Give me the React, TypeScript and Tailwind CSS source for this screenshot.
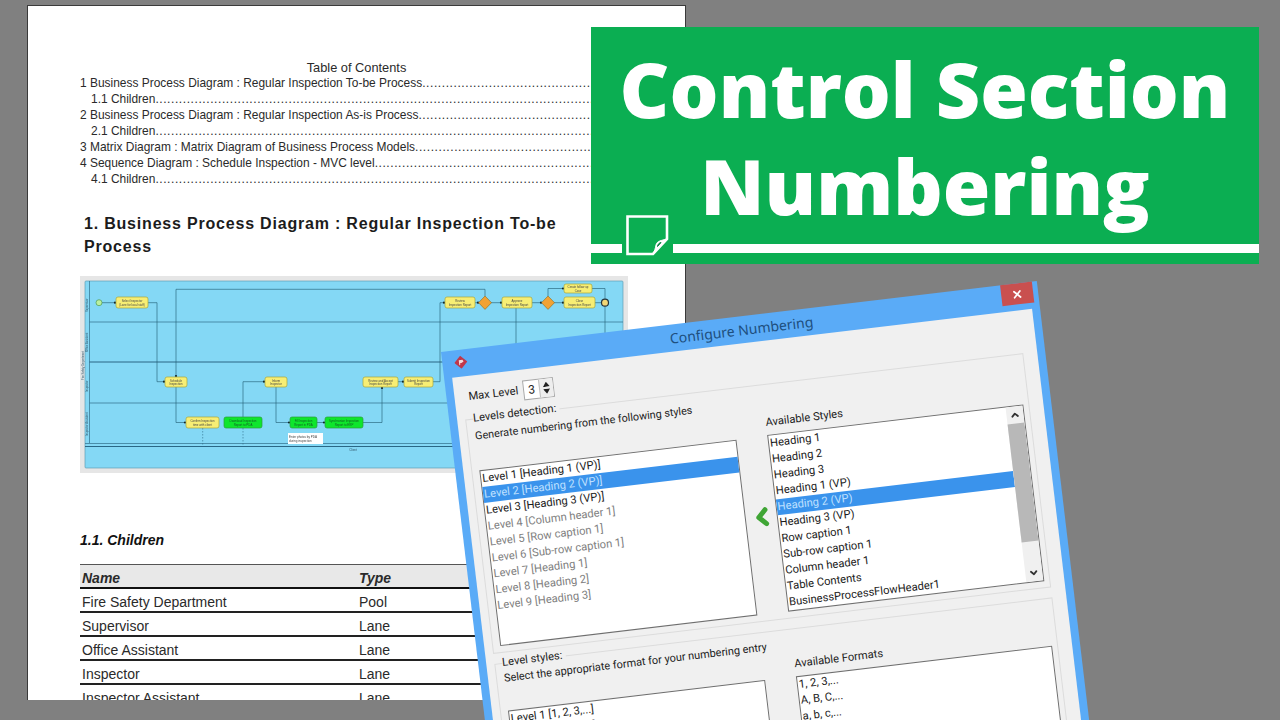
import { ChevronDown, ChevronUp, X } from "lucide-react";

const TOC = [
  { text: "1 Business Process Diagram : Regular Inspection To-be Process", sub: false },
  { text: "1.1 Children", sub: true },
  { text: "2 Business Process Diagram : Regular Inspection As-is Process", sub: false },
  { text: "2.1 Children", sub: true },
  { text: "3 Matrix Diagram : Matrix Diagram of Business Process Models", sub: false },
  { text: "4 Sequence Diagram : Schedule Inspection - MVC level", sub: false },
  { text: "4.1 Children", sub: true },
];

const CHILDREN = [
  ["Fire Safety Department", "Pool"],
  ["Supervisor", "Lane"],
  ["Office Assistant", "Lane"],
  ["Inspector", "Lane"],
  ["Inspector Assistant", "Lane"],
];

const LEVELS = [
  { label: "Level 1 [Heading 1 (VP)]", on: true },
  { label: "Level 2 [Heading 2 (VP)]", on: true, selected: true },
  { label: "Level 3 [Heading 3 (VP)]", on: true },
  { label: "Level 4 [Column header 1]" },
  { label: "Level 5 [Row caption 1]" },
  { label: "Level 6 [Sub-row caption 1]" },
  { label: "Level 7 [Heading 1]" },
  { label: "Level 8 [Heading 2]" },
  { label: "Level 9 [Heading 3]" },
];

const STYLES = [
  "Heading 1",
  "Heading 2",
  "Heading 3",
  "Heading 1 (VP)",
  "Heading 2 (VP)",
  "Heading 3 (VP)",
  "Row caption 1",
  "Sub-row caption 1",
  "Column header 1",
  "Table Contents",
  "BusinessProcessFlowHeader1",
];

const FORMATS = ["1, 2, 3,...", "A, B, C,...", "a, b, c,..."];

const DOTS = ".".repeat(120);

const TASKS = [
  { x: 36, y: 21, w: 32, h: 11, a: "Select Inspector", b: "(Lane for local staff)" },
  { x: 85, y: 101, w: 22, h: 10, a: "Schedule", b: "Inspection" },
  { x: 185, y: 101, w: 22, h: 10, a: "Inform", b: "Inspector" },
  { x: 283, y: 101, w: 35, h: 10, a: "Review and Accept", b: "Inspection Report" },
  { x: 324, y: 101, w: 29, h: 10, a: "Submit Inspection", b: "Report" },
  { x: 106, y: 141, w: 33, h: 11, a: "Confirm Inspection", b: "time with client" },
  { x: 365, y: 21, w: 30, h: 11, a: "Review", b: "Inspection Report" },
  { x: 422, y: 21, w: 30, h: 11, a: "Approve", b: "Inspection Report" },
  { x: 484, y: 8, w: 28, h: 9, a: "Create follow up", b: "Case" },
  { x: 484, y: 21, w: 31, h: 11, a: "Close", b: "Inspection Report" },
];

const GREEN_TASKS = [
  { x: 144, y: 141, w: 38, h: 11, a: "Download Inspection", b: "Report to PDA" },
  { x: 210, y: 141, w: 27, h: 11, a: "Fill Inspection", b: "Report in PDA" },
  { x: 245, y: 141, w: 38, h: 11, a: "Synchronize Inspection", b: "Report to ERP" },
];

const FLOWS = [
  "M22 26.7H36",
  "M68 26.7H77V105.7H85",
  "M96 101V13.3H405V20",
  "M96 111V146.5H106",
  "M163 141V105.7H185",
  "M196 111V146.5H210",
  "M237 146.5H245",
  "M283 146.5H302V111",
  "M318 105.7H324",
  "M353 105.7H360V26.7H365",
  "M395 26.7H399",
  "M411 26.7H422",
  "M452 26.7H462",
  "M474 26.7H484",
  "M468 20V12.5H484",
  "M512 12.5H525V23",
  "M515 26.7H521",
  "M436 32V130",
  "M525 30V130",
];

// little arrow heads where a flow enters a shape
const HEADS = [
  [35, 26.7], [84, 105.7], [96, 100], [105, 146.5], [184, 105.7], [209, 146.5], [244, 146.5],
  [323, 105.7], [302, 112], [364, 26.7], [398, 26.7], [421, 26.7], [461, 26.7], [483, 26.7], [483, 12.5],
];

function ProcessDiagram() {
  return (
    <svg width="548" height="197" viewBox="0 0 548 197" className="block blur-[0.3px]" fontFamily="Liberation Sans, sans-serif">
      <rect width="548" height="197" fill="#e6e6e6" />
      <rect x="5" y="5" width="538" height="187" rx="1" fill="#84d8f5" stroke="#5e9db5" strokeWidth="0.7" />
      <path d="M9.5 5V167M9.5 46H543M9.5 127H543M5 167.5H543" stroke="#2f6f8a" strokeWidth="0.7" fill="none" />
      <path d="M5 170.5H543M9.5 86H543" stroke="#1f5a78" strokeWidth="0.9" fill="none" />
      <path d={FLOWS.join("")} stroke="#1f5a70" strokeWidth="0.6" fill="none" />
      <path d="M122.7 152V170M163 152V170" stroke="#2f6f8a" strokeWidth="0.6" strokeDasharray="1.5 1.5" fill="none" />
      {HEADS.map(([x, y]) => (
        <circle key={`${x}-${y}`} cx={x} cy={y} r="1.1" fill="#10242c" />
      ))}
      <circle cx="19" cy="26.7" r="3" fill="#b9f0a0" stroke="#4f9a50" strokeWidth="0.7" />
      <circle cx="525" cy="26.7" r="3.5" fill="#f2d675" stroke="#28353d" strokeWidth="1.2" />
      <path d="M405 20L411.5 26.7L405 33.4L398.5 26.7ZM468 20L474.5 26.7L468 33.4L461.5 26.7Z" fill="#f2a233" stroke="#8a6a20" strokeWidth="0.6" />
      {TASKS.map((t) => (
        <g key={t.a + t.x}>
          <rect x={t.x} y={t.y} width={t.w} height={t.h} rx="2" fill="#f7ee74" stroke="#a8a83c" strokeWidth="0.7" />
          <text x={t.x + t.w / 2} y={t.y + t.h / 2 - 0.3} fontSize="2.9" textAnchor="middle" fill="#444">{t.a}</text>
          <text x={t.x + t.w / 2} y={t.y + t.h / 2 + 3} fontSize="2.9" textAnchor="middle" fill="#444">{t.b}</text>
        </g>
      ))}
      {GREEN_TASKS.map((t) => (
        <g key={t.a}>
          <rect x={t.x} y={t.y} width={t.w} height={t.h} rx="2" fill="#0ee62c" stroke="#2b9b3d" strokeWidth="0.7" />
          <text x={t.x + t.w / 2} y={t.y + t.h / 2 - 0.3} fontSize="2.9" textAnchor="middle" fill="#125a24">{t.a}</text>
          <text x={t.x + t.w / 2} y={t.y + t.h / 2 + 3} fontSize="2.9" textAnchor="middle" fill="#125a24">{t.b}</text>
        </g>
      ))}
      <rect x="208" y="157" width="35" height="11" fill="#ffffff" />
      <text x="209" y="161.5" fontSize="3" fill="#444">Enter photos by PDA</text>
      <text x="209" y="165.5" fontSize="3" fill="#444">during inspection</text>
      <text x="273" y="174.5" fontSize="3" textAnchor="middle" fill="#33566a">Client</text>
      <g fontSize="2.8" fill="#33566a">
        <text transform="translate(8 36) rotate(-90)">Supervisor</text>
        <text transform="translate(8 76) rotate(-90)">Office Assistant</text>
        <text transform="translate(8 116) rotate(-90)">Inspector</text>
        <text transform="translate(8 160) rotate(-90)">Inspector Assistant</text>
        <text transform="translate(4.4 104) rotate(-90)">Fire Safety Department</text>
      </g>
    </svg>
  );
}

function DocumentPage() {
  return (
    <div className="absolute left-[27px] top-[5px] h-[695px] w-[659px] overflow-hidden border-x border-t border-[#3a3a3a] bg-white pl-[52px] pt-[54px] text-[#2a2a2a] [font-family:'Liberation_Sans',Arial,sans-serif]">
      <div className="h-[15px] pr-[52px] text-center text-[12.8px] leading-[16px]">Table of Contents</div>
      <div className="text-[11.95px] leading-[16px]">
        {TOC.map((row) => (
          <div key={row.text} className={row.sub ? "flex pl-[11px]" : "flex"}>
            <span className="whitespace-nowrap">{row.text}</span>
            <span className="min-w-0 flex-1 overflow-hidden whitespace-nowrap tracking-[0.6px]">{DOTS}</span>
          </div>
        ))}
      </div>
      <h1 className="mt-[25px] w-[500px] pl-[4px] text-[16px] font-bold leading-[23px] tracking-[0.8px] text-[#1c1c1c]">
        1. Business Process Diagram : Regular Inspection To-be Process
      </h1>
      <div className="mt-[18px]">
        <ProcessDiagram />
      </div>
      <h2 className="mt-[57px] h-[20px] text-[14px] font-bold italic leading-[20px] text-[#111]">1.1. Children</h2>
      <div className="mt-[14px] w-[560px] border-t border-[#555] text-[14px]">
        <div className="flex h-[24px] items-center border-b-2 border-[#111] bg-[#e8e8e8] pt-[5px] font-bold italic">
          <span className="w-[279px] pl-[2px]">Name</span>
          <span>Type</span>
        </div>
        {CHILDREN.map(([name, type]) => (
          <div key={name} className="flex h-[24px] items-center border-b-2 border-[#222] pt-[5px]">
            <span className="w-[279px] pl-[2px]">{name}</span>
            <span>{type}</span>
          </div>
        ))}
      </div>
    </div>
  );
}

function Banner() {
  return (
    <div className="absolute left-[591px] top-[27px] flex h-[237px] w-[668px] flex-col bg-[#0bae52] pt-[13px] text-white">
      <div className="h-[97px] text-center text-[77px] font-extrabold leading-[97px] [font-family:'Open_Sans',sans-serif]">Control Section</div>
      <div className="h-[97px] text-center text-[77px] font-extrabold leading-[97px] [font-family:'Open_Sans',sans-serif]">Numbering</div>
      <div className="-mt-[19px] flex items-start">
        <div className="mt-[29px] h-[9px] w-[31px] bg-white" />
        <svg width="44" height="41" viewBox="0 0 44 41" className="ml-[4px] shrink-0" fill="none" stroke="white" strokeWidth="2.6">
          <path d="M1.5 1.5H41V24L27 39H1.5Z" />
          <path d="M41 24C35 25.5 31 26 30 30C29.5 33 28.5 36 27 39Z" fill="white" stroke="white" strokeWidth="1" />
          <path d="M35 27.5C33 28 32 29 31.5 31.5Z" fill="#0a7f42" stroke="#0a7f42" strokeWidth="1" />
        </svg>
        <div className="ml-[3px] mt-[29px] h-[9px] flex-1 bg-white" />
      </div>
    </div>
  );
}

function ListRow({ label, selected, muted }: { label: string; selected?: boolean; muted?: boolean }) {
  const tone = selected ? "bg-[#3a93ec] text-[#bfe0ff]" : muted ? "text-[#808080]" : "text-[#1a1a1a]";
  return <div className={`h-[16px] whitespace-nowrap pl-[1px] leading-[16px] ${tone}`}>{label}</div>;
}

function ConfigureDialog() {
  return (
    <div className="absolute left-[441px] top-[352px] h-[560px] w-[600px] origin-top-left rotate-[-6.8deg] bg-[#5aabf7] text-[11.2px] text-[#222] [font-family:'Roboto',sans-serif]">
      <div className="grid h-[27px] grid-cols-[1fr_auto_1fr] pl-[12px]">
        <svg width="13" height="13" viewBox="0 0 14 14" className="mt-[6px]">
          <path d="M7 0L14 7L7 14L0 7Z" fill="#c0364a" />
          <path d="M5 4.5H9L10 6.5L7.5 8H6V10H5Z" fill="#f4d9dc" />
        </svg>
        <div className="pr-[10px] pt-[4px] text-[14px] leading-[20px] text-[#1e4f7e] [font-family:'Noto_Sans',sans-serif]">Configure Numbering</div>
        <div className="justify-self-end pr-[5px]">
          <div className="flex h-[21px] w-[32px] items-center justify-center bg-[#c9504f]">
            <X size={12} strokeWidth={3.5} color="#ffffff" />
          </div>
        </div>
      </div>

      <div className="mx-[8px] h-[520px] bg-[#f0f0f0] pl-[8px] pt-[11px]">
        <div className="flex h-[20px] items-center gap-[5px] pl-[6px]">
          <span className="whitespace-nowrap">Max Level</span>
          <div className="flex h-[20px] w-[31px] border border-[#a8a8a8] bg-white">
            <span className="w-[15px] text-center text-[12px] leading-[18px]">3</span>
            <div className="flex flex-1 flex-col items-center justify-center gap-[2px] border-l border-[#c0c0c0] bg-[#eeeeee]">
              <svg width="7" height="5" viewBox="0 0 7 5"><path d="M3.5 0L7 5H0Z" fill="#222" /></svg>
              <svg width="7" height="5" viewBox="0 0 7 5"><path d="M3.5 5L0 0H7Z" fill="#222" /></svg>
            </div>
          </div>
        </div>

        <section className="mt-[12px] h-[236px] w-[562px] border border-[#dcdcdc] pl-[7px]">
          <div className="-mt-[9px] h-[16px] w-fit bg-[#f0f0f0] pr-[3px] leading-[16px]">Levels detection:</div>
          <div className="mt-[2px] grid grid-cols-[259px_31px_258px] items-end">
            <div>
              <div className="h-[16px] whitespace-nowrap text-[10.8px] leading-[16px]">Generate numbering from the following styles</div>
              <div className="mt-[26px] h-[177px] border border-[#6f6f6f] bg-white">
                {LEVELS.map((l) => (
                  <ListRow key={l.label} label={l.label} selected={l.selected} muted={!l.on} />
                ))}
              </div>
            </div>
            <div className="flex h-[194px] items-center justify-center">
              <svg width="16" height="20" viewBox="0 0 16 20" fill="none" stroke="#3fa535" strokeWidth="5" strokeLinecap="round" strokeLinejoin="round">
                <path d="M12 3L5 10L12 17" />
              </svg>
            </div>
            <div>
              <div className="h-[16px] leading-[16px]">Available Styles</div>
              <div className="mt-[4px] flex h-[178px] overflow-hidden border border-[#6f6f6f] bg-white">
                <div className="min-w-0 flex-1">
                  {STYLES.map((s) => (
                    <ListRow key={s} label={s} selected={s === "Heading 2 (VP)"} />
                  ))}
                </div>
                <div className="flex w-[17px] shrink-0 flex-col bg-[#f0f0f0]">
                  <div className="flex h-[17px] items-center justify-center">
                    <ChevronUp size={11} strokeWidth={4} color="#333" />
                  </div>
                  <div className="h-[119px] bg-[#b8b8b8]" />
                  <div className="flex-1" />
                  <div className="flex h-[17px] items-center justify-center">
                    <ChevronDown size={11} strokeWidth={4} color="#333" />
                  </div>
                </div>
              </div>
            </div>
          </div>
        </section>

        <section className="mt-[10px] h-[230px] w-[562px] border border-[#dcdcdc] pl-[7px]">
          <div className="-mt-[9px] h-[16px] w-fit bg-[#f0f0f0] pr-[3px] leading-[16px]">Level styles:</div>
          <div className="grid grid-cols-[259px_31px_258px] items-end">
            <div>
              <div className="h-[16px] whitespace-nowrap text-[10.95px] leading-[16px]">Select the appropriate format for your numbering entry</div>
              <div className="mt-[24px] h-[150px] border border-[#6f6f6f] bg-white">
                <ListRow label="Level 1 [1, 2, 3,...]" />
                <ListRow label="Level 2 [1, 2, 3,...]" />
              </div>
            </div>
            <div />
            <div>
              <div className="h-[16px] leading-[16px]">Available Formats</div>
              <div className="mt-[4px] h-[150px] border border-[#6f6f6f] bg-white">
                {FORMATS.map((f) => (
                  <ListRow key={f} label={f} />
                ))}
              </div>
            </div>
          </div>
        </section>
      </div>
    </div>
  );
}

export default function App() {
  return (
    <div className="relative h-[720px] w-[1280px] overflow-hidden bg-[#808080]">
      <DocumentPage />
      <Banner />
      <ConfigureDialog />
    </div>
  );
}
